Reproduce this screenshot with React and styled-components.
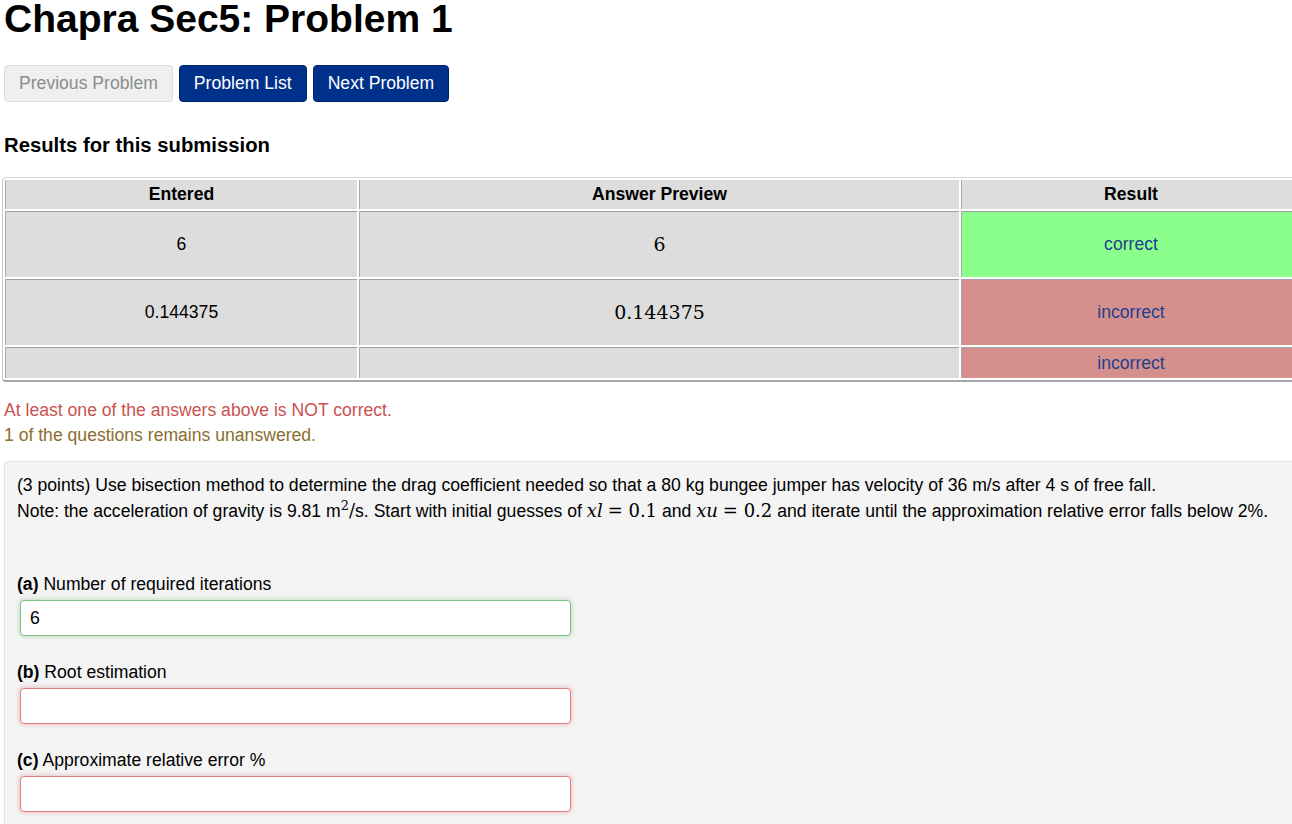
import styled, { createGlobalStyle } from "styled-components";

const Global = createGlobalStyle`
  html, body {
    margin: 0;
    padding: 0;
    background: #fff;
    overflow: hidden;
  }
  body {
    font-family: "Liberation Sans", Arial, sans-serif;
    font-size: 17.6px;
    color: #000;
  }
`

const Page = styled.div`
  width: 1300px;
  padding: 0 4px;
`

const Title = styled.h1`
  font-size: 39px;
  font-weight: 700;
  margin: 0;
  line-height: 40px;
  padding-top: 0;
  margin-top: -1px;
`

const NavBar = styled.div`
  display: flex;
  gap: 6px;
  margin-top: 26px;
`

const NavButton = styled.button`
  font-family: "Liberation Sans", Arial, sans-serif;
  font-size: 17.6px;
  height: 37px;
  padding: 0 14px;
  border-radius: 4px;
  border: 1px solid ${(p) => (p.disabled ? "#dcdcdc" : "#00246b")};
  background: ${(p) => (p.disabled ? "#efefef" : "#00318a")};
  color: ${(p) => (p.disabled ? "#8c8c8c" : "#fff")};
  cursor: ${(p) => (p.disabled ? "default" : "pointer")};
`

const SectionTitle = styled.h2`
  font-size: 20.3px;
  font-weight: 700;
  margin: 31px 0 0;
  line-height: 24px;
`

const ResultsTable = styled.table`
  margin-top: 20px;
  width: 1300px;
  border-collapse: separate;
  border-spacing: 2px;
  border-top: 1px solid #d4d4d4;
  border-bottom: 2px solid #a6a6a6;
  border-left: 1px solid #c8c8c8;
  border-radius: 4px;
  table-layout: fixed;
  position: relative;
  left: -2px;
`

const HeadCell = styled.th`
  background: #dddddd;
  height: 29px;
  font-weight: 700;
  text-align: center;
  border-left: 1px solid #a8a8a8;
  padding: 0;
`

const Cell = styled.td`
  background: ${(p) => p.$bg || "#dddddd"};
  color: ${(p) => p.$color || "#000"};
  height: ${(p) => p.$h || 65}px;
  text-align: center;
  border-left: 1px solid #a8a8a8;
  border-top: 1px solid #a0a0a0;
  padding: 0;
`

const MathValue = styled.span`
  font-family: "DejaVu Serif", "Liberation Serif", serif;
  font-size: 19px;
`

const Messages = styled.div`
  margin-top: 16px;
  line-height: 25px;
`

const Msg = styled.div`
  color: ${(p) => p.$color};
`

const ProblemBox = styled.div`
  margin-top: 13px;
  width: 1300px;
  background: #f4f4f4;
  border: 1px solid #e3e3e3;
  border-radius: 4px;
  padding: 10px 12px 20px;
  box-sizing: border-box;
`

const Statement = styled.div`
  line-height: 26px;
`

const MathI = styled.span`
  font-family: "DejaVu Serif", "Liberation Serif", serif;
  font-style: italic;
  font-size: 18px;
`

const MathN = styled.span`
  font-family: "DejaVu Serif", "Liberation Serif", serif;
  font-size: 18px;
`

const Sup = styled.sup`
  font-family: "DejaVu Serif", "Liberation Serif", serif;
  font-size: 13px;
  line-height: 0;
  vertical-align: 7px;
`

const Part = styled.div`
  margin-top: ${(p) => p.$top}px;
`

const Label = styled.div`
  line-height: 24px;
  b {
    font-weight: 700;
  }
`

const AnswerInput = styled.input`
  display: block;
  box-sizing: border-box;
  margin: 4px 0 0 3px;
  width: 551px;
  height: 36px;
  padding: 0 9px;
  font-family: "Liberation Sans", Arial, sans-serif;
  font-size: 17.6px;
  background: #fff;
  border-radius: 4px;
  outline: none;
  border: 1px solid ${(p) => (p.$ok ? "#7fbf7f" : "#e08080")};
  box-shadow: 0 0 5px ${(p) => (p.$ok ? "rgba(90,170,90,0.45)" : "rgba(220,90,90,0.45)")};
`

export default function App() {
  return (
    <Page>
      <Global />
      <Title>Chapra Sec5: Problem 1</Title>
      <NavBar>
        <NavButton disabled>Previous Problem</NavButton>
        <NavButton>Problem List</NavButton>
        <NavButton>Next Problem</NavButton>
      </NavBar>

      <SectionTitle>Results for this submission</SectionTitle>
      <ResultsTable>
        <colgroup>
          <col style={{ width: 352 }} />
          <col style={{ width: 600 }} />
          <col />
        </colgroup>
        <thead>
          <tr>
            <HeadCell>Entered</HeadCell>
            <HeadCell>Answer Preview</HeadCell>
            <HeadCell>Result</HeadCell>
          </tr>
        </thead>
        <tbody>
          <tr>
            <Cell>6</Cell>
            <Cell><MathValue>6</MathValue></Cell>
            <Cell $bg="#8bff8b" $color="#1f3f8c">correct</Cell>
          </tr>
          <tr>
            <Cell>0.144375</Cell>
            <Cell><MathValue>0.144375</MathValue></Cell>
            <Cell $bg="#d5908e" $color="#1f3f8c">incorrect</Cell>
          </tr>
          <tr>
            <Cell $h={30}></Cell>
            <Cell $h={30}></Cell>
            <Cell $h={30} $bg="#d5908e" $color="#1f3f8c">incorrect</Cell>
          </tr>
        </tbody>
      </ResultsTable>

      <Messages>
        <Msg $color="#c9524f">At least one of the answers above is NOT correct.</Msg>
        <Msg $color="#8a6d2f">1 of the questions remains unanswered.</Msg>
      </Messages>

      <ProblemBox>
        <Statement>
          (3 points) Use bisection method to determine the drag coefficient needed so that a 80 kg bungee jumper has velocity of 36 m/s after 4 s of free fall.
          <br />
          Note: the acceleration of gravity is 9.81 m<Sup>2</Sup>
          <MathN>/</MathN>s. Start with initial guesses of <MathI>xl</MathI> <MathN>= 0.1</MathN> and{" "}
          <MathI>xu</MathI> <MathN>= 0.2</MathN> and iterate until the approximation relative error falls below 2%.
        </Statement>

        <Part $top={48}>
          <Label><b>(a)</b> Number of required iterations</Label>
          <AnswerInput $ok defaultValue="6" />
        </Part>
        <Part $top={24}>
          <Label><b>(b)</b> Root estimation</Label>
          <AnswerInput autoFocus />
        </Part>
        <Part $top={24}>
          <Label><b>(c)</b> Approximate relative error %</Label>
          <AnswerInput />
        </Part>
      </ProblemBox>
    </Page>
  );
}
